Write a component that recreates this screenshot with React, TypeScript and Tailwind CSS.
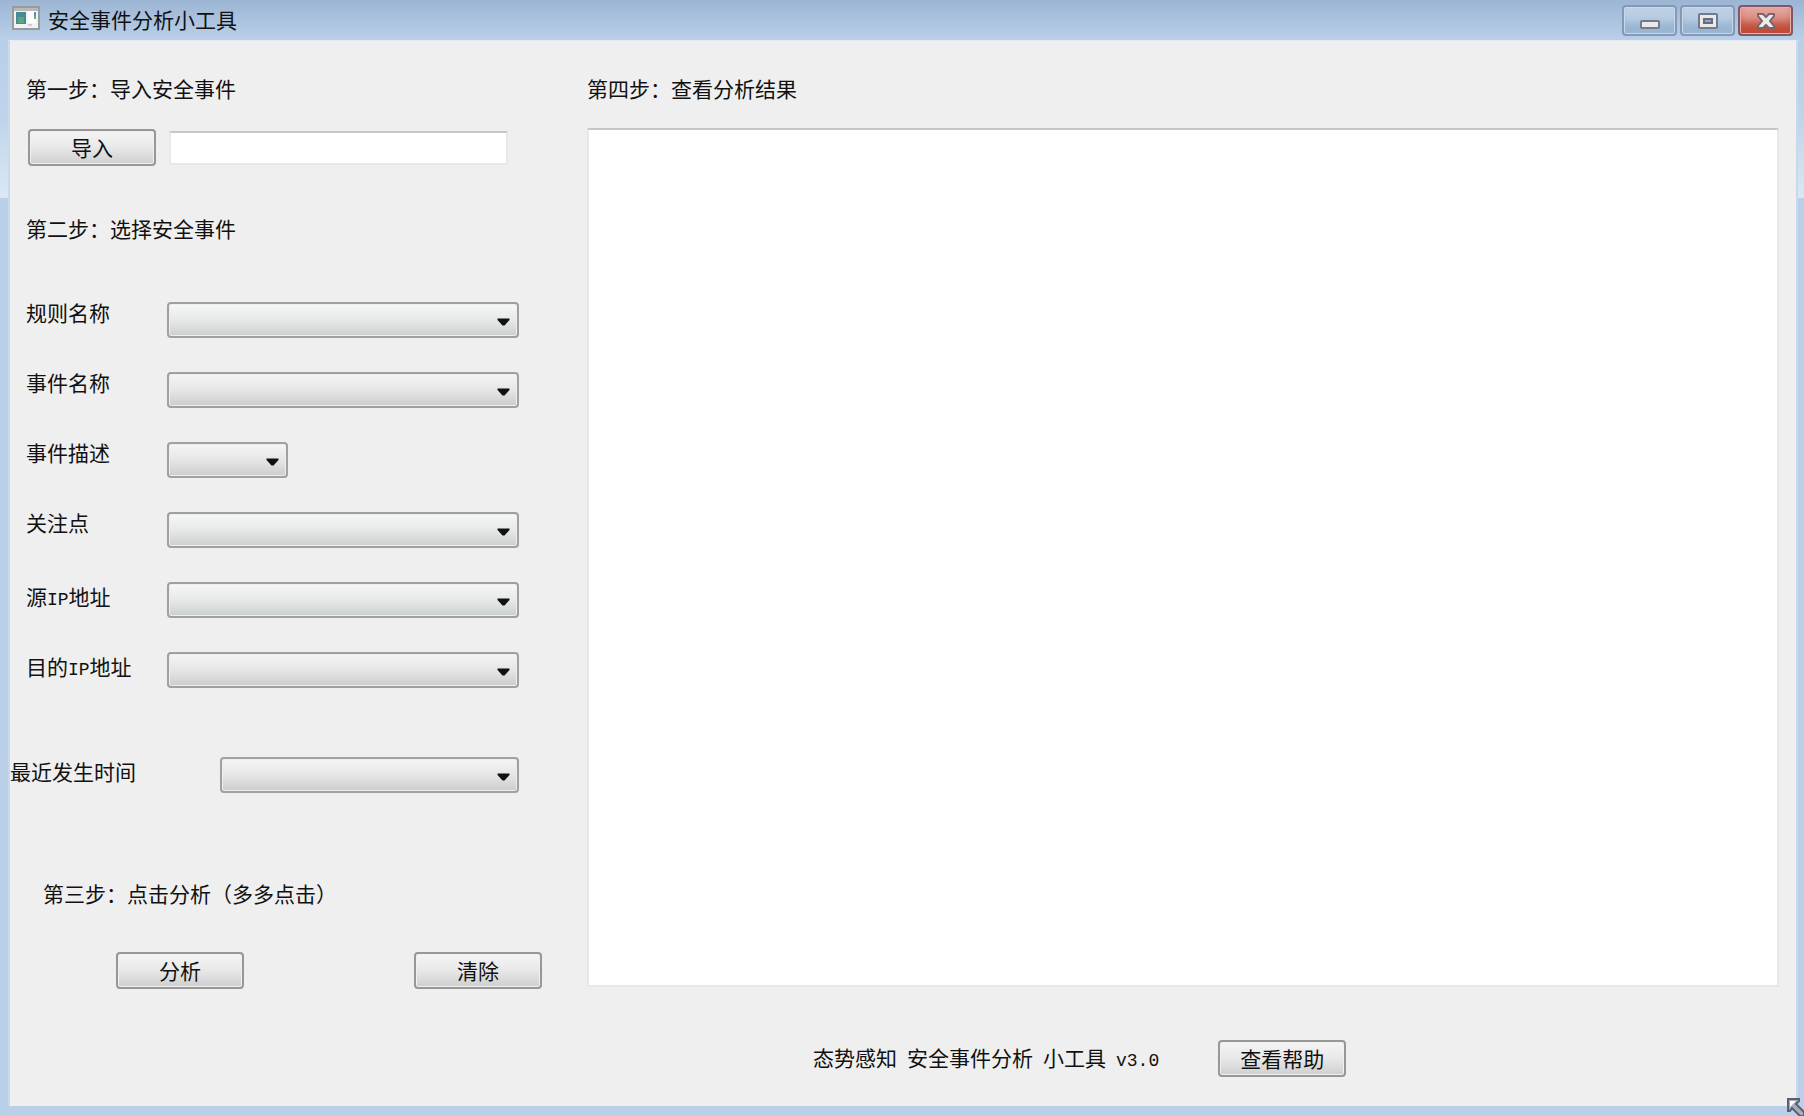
import clsx from "clsx";
import type { ReactNode } from "react";

type SelectTone = "grey" | "green";

interface Field {
  id: string;
  label: ReactNode;
  tone: SelectTone;
  // these labels sit closer to the middle of their select
  low?: boolean;
  narrow?: boolean;
}

const Latin = ({ children }: { children: ReactNode }) => (
  <span className="font-['Liberation_Mono',monospace] text-lg leading-none">{children}</span>
);

const fields: Field[] = [
  { id: "rule-name", label: "规则名称", tone: "green" },
  { id: "event-name", label: "事件名称", tone: "grey" },
  { id: "event-desc", label: "事件描述", tone: "grey", narrow: true },
  { id: "focus", label: "关注点", tone: "green" },
  { id: "source-ip", label: <>源<Latin>IP</Latin>地址</>, tone: "green", low: true },
  { id: "target-ip", label: <>目的<Latin>IP</Latin>地址</>, tone: "grey", low: true },
];

const AeroButton = ({ children }: { children: ReactNode }) => (
  <button
    type="button"
    className="h-[37px] w-32 shrink-0 rounded-[4px] border-2 border-[#979797] bg-linear-to-b from-[#f4f4f4] from-0% via-[#e9e9e9] via-48% to-[#cfcfcf] pb-px leading-5 shadow-[inset_0_0_0_1px_#f0f0f0]"
  >
    {children}
  </button>
);

const AeroSelect = ({ id, tone, className }: { id: string; tone: SelectTone; className: string }) => (
  <div className={clsx("relative h-9 shrink-0", className)}>
    <select
      id={id}
      className={clsx(
        "block size-full appearance-none rounded-[4px] border-2 border-[#a0a0a0] bg-linear-to-b from-0% via-50% shadow-[inset_0_0_0_1px_#eeeeee]",
        tone === "green" ? "from-[#f5f8f6] via-[#e6e9e7] to-[#cbcfcd]" : "from-[#f5f5f5] via-[#e6e6e6] to-[#cccccc]"
      )}
    />
    <svg
      className="pointer-events-none absolute right-[9px] top-4"
      width="13"
      height="8"
      viewBox="0 0 13 8"
    >
      <path
        d="M0.5 0.5H12.5V2L7.5 7.5H5.5L0.5 2Z"
        fill="#111"
      />
    </svg>
  </div>
);

const CaptionButton = ({ label, close, children }: { label: string; close?: boolean; children: ReactNode }) => (
  <button
    type="button"
    aria-label={label}
    className={clsx(
      "flex h-[31px] w-[55px] items-center justify-center rounded-[4px] border-2 bg-linear-to-b",
      close
        ? "border-[#80566a] from-[#e5a89f] from-0% via-[#db8f84] via-49% to-[#cf6a58] shadow-[inset_0_0_0_1px_#e6afa8,inset_0_-14px_8px_-3px_#c04c37]"
        : "border-[#8399b6] from-[#bfd1e5] from-0% via-[#b5cbe2] via-49% to-[#a9c3df] shadow-[inset_0_0_0_1px_#c8d9eb,inset_0_-14px_6px_-3px_#9ab5d2]"
    )}
  >
    {children}
  </button>
);

const TitleBar = () => (
  <header className="flex h-10 items-start bg-linear-to-b from-[#9bb5d3] to-[#bad0e9] pl-3 pr-[11px]">
    <svg
      className="mt-[6px]"
      width="28"
      height="25"
      viewBox="0 0 28 25"
    >
      <rect x="1" y="1" width="26" height="22" fill="#f2f2f2" stroke="#9a9a9a" strokeWidth="2" />
      <rect x="2" y="2" width="24" height="3" fill="#b8b8b8" />
      <rect x="4" y="6" width="10" height="12" fill="#478a94" />
      <rect x="6" y="11" width="6" height="6" fill="#57a77f" />
      <rect x="16" y="5" width="8" height="12" fill="#ffffff" />
      <rect x="22" y="6" width="2" height="4" fill="#568fc4" />
      <rect x="22" y="10" width="2" height="3" fill="#63ad7b" />
      <rect x="16" y="18" width="4" height="2" fill="#d0d0d0" />
    </svg>
    <h1 className="ml-2 mt-[9px]">安全事件分析小工具</h1>
    <div className="ml-auto mt-[5px] flex gap-[3px]">
      <CaptionButton label="最小化">
        <svg width="20" height="24" viewBox="0 0 20 24">
          <rect x="1" y="12" width="18" height="7" rx="1" fill="#e9e9e9" stroke="#74798c" strokeWidth="2" />
        </svg>
      </CaptionButton>
      <CaptionButton label="最大化">
        <svg width="20" height="24" viewBox="0 0 20 24">
          <rect x="1" y="5" width="18" height="14" rx="1" fill="#e9e9e9" stroke="#74798c" strokeWidth="2" />
          <rect x="6" y="10" width="8" height="4" fill="#8ba7c6" stroke="#666b7e" strokeWidth="2" />
        </svg>
      </CaptionButton>
      <CaptionButton label="关闭" close>
        <svg width="20" height="24" viewBox="0 0 20 24">
          <path
            d="M2 5H7L10 8L13 5H18V7L14 12L18 17V19H13L10 16L7 19H2V17L6 12L2 7Z"
            fill="#ececec"
            stroke="#7d6270"
            strokeWidth="2"
          />
        </svg>
      </CaptionButton>
    </div>
  </header>
);

const App = () => {
  return (
    <div className="relative flex min-h-screen flex-col overflow-hidden bg-[#bad0e9] font-['Noto_Sans_CJK_SC',sans-serif] text-[21px] leading-5 text-[#111]">
      <TitleBar />

      <div className="flex flex-1 bg-[linear-gradient(#b9cfe7,#bfd4ea_50%,#dbe8f4)] bg-[length:100%_158px] bg-no-repeat pb-[10px] pl-2 pr-[6px]">
        <main className="flex flex-1 border-x-2 border-t border-x-[#c8d9ec] border-t-[#e1eaf3] bg-[#efefef] pr-[17px] pt-[37px]">
          {/* Left column: import, filters, actions */}
          <form className="flex w-[577px] shrink-0 flex-col">
            <label
              htmlFor="file-path"
              className="ml-4"
            >
              第一步：导入安全事件
            </label>
            <div className="ml-[18px] mt-[31px] flex items-center gap-[13px]">
              <AeroButton>导入</AeroButton>
              <input
                id="file-path"
                type="text"
                className="h-[34px] w-[339px] border-2 border-[#e8e9ee] border-t-[#c6c6cc] bg-white px-2"
              />
            </div>

            <h2 className="ml-4 mt-[52px]">第二步：选择安全事件</h2>
            <div className="mt-16 flex flex-col gap-[34px]">
              {fields.map((field) => (
                <div
                  key={field.id}
                  className="flex h-9 items-start pl-4"
                >
                  <label
                    htmlFor={field.id}
                    className={clsx("w-[141px]", field.low && "pt-1")}
                  >
                    {field.label}
                  </label>
                  <AeroSelect
                    id={field.id}
                    tone={field.tone}
                    className={field.narrow ? "w-[121px]" : "w-[352px]"}
                  />
                </div>
              ))}
            </div>

            <div className="mt-[69px] flex h-9 items-start">
              <label
                htmlFor="last-time"
                className="w-[210px] pt-1"
              >
                最近发生时间
              </label>
              <AeroSelect
                id="last-time"
                tone="grey"
                className="w-[299px]"
              />
            </div>

            <h2 className="ml-[33px] mt-[90px]">第三步：点击分析（多多点击）</h2>
            <div className="ml-[106px] mt-[49px] flex gap-[170px]">
              <AeroButton>分析</AeroButton>
              <AeroButton>清除</AeroButton>
            </div>
          </form>

          {/* Right column: results */}
          <section className="flex min-w-0 flex-1 flex-col pb-[29px]">
            <label
              htmlFor="result"
              className="self-start"
            >
              第四步：查看分析结果
            </label>
            <textarea
              id="result"
              className="mt-[30px] w-full flex-1 resize-none border-2 border-[#e6e8ed] border-t-[#c6c6cc] bg-white p-2"
            />
            <footer className="mt-[53px] flex items-center pl-[226px]">
              <p className="flex items-baseline gap-[10px] whitespace-nowrap">
                <span>态势感知</span>
                <span>安全事件分析</span>
                <span>小工具</span>
                <Latin>v3.0</Latin>
              </p>
              <div className="ml-[59px]">
                <AeroButton>查看帮助</AeroButton>
              </div>
            </footer>
          </section>
        </main>
      </div>

      {/* Resize cursor resting on the window corner */}
      <svg
        className="pointer-events-none absolute bottom-0 right-0"
        width="18"
        height="18"
        viewBox="0 0 18 18"
      >
        <path
          d="M2 1H13V3L10 6L18 14V18H14L6 10L4 13H2Z"
          fill="#a9adb8"
          stroke="#5b6070"
          strokeWidth="2"
        />
        <path d="M4 3H10L4 9Z" fill="#ffffff" />
      </svg>
    </div>
  );
};

export default App;
